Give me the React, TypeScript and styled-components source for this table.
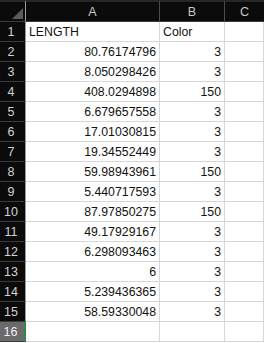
import styled, { createGlobalStyle } from 'styled-components';

const GlobalStyle = createGlobalStyle`
  html, body {
    margin: 0;
    padding: 0;
    background: #ffffff;
    overflow: hidden;
  }
`;

const rows: { a: string; b: string }[] = [
  { a: 'LENGTH', b: 'Color' },
  { a: '80.76174796', b: '3' },
  { a: '8.050298426', b: '3' },
  { a: '408.0294898', b: '150' },
  { a: '6.679657558', b: '3' },
  { a: '17.01030815', b: '3' },
  { a: '19.34552449', b: '3' },
  { a: '59.98943961', b: '150' },
  { a: '5.440717593', b: '3' },
  { a: '87.97850275', b: '150' },
  { a: '49.17929167', b: '3' },
  { a: '6.298093463', b: '3' },
  { a: '6', b: '3' },
  { a: '5.239436365', b: '3' },
  { a: '58.59330048', b: '3' },
  { a: '', b: '' },
];

const Sheet = styled.div`
  display: grid;
  grid-template-columns: 26px 134px 65px 1fr;
  grid-auto-rows: 20px;
  grid-template-rows: 22px;
  width: 264px;
  font-family: 'Liberation Sans', Arial, sans-serif;
  font-size: 12.3px;
`;

const Corner = styled.div`
  position: relative;
  background: #0b0b0b;
  border-top: 2px solid #262626;
  border-right: 1px solid #9a9a9a;
  border-bottom: 1px solid #3c3c3c;
`;

const Triangle = styled.svg`
  position: absolute;
  left: 12px;
  top: 6px;
`;

const ColHead = styled.div<{ $last?: boolean }>`
  display: flex;
  align-items: center;
  justify-content: center;
  background: #0b0b0b;
  color: #c9c9c9;
  font-size: 12.5px;
  border-top: 2px solid #262626;
  border-right: ${(p) => (p.$last ? 'none' : '1px solid #4a4a4a')};
  border-bottom: 1px solid #3c3c3c;
`;

const RowHead = styled.div<{ $active?: boolean }>`
  display: flex;
  align-items: center;
  justify-content: center;
  padding-right: 3px;
  background: ${(p) => (p.$active ? '#6a6a6a' : '#0b0b0b')};
  color: ${(p) => (p.$active ? '#f0f0f0' : '#d2d2d2')};
  font-size: 12.5px;
  border-bottom: 1px solid #3c3c3c;
  border-right: ${(p) => (p.$active ? '2px solid #2e8b4f' : '1px solid #9a9a9a')};
`;

const Cell = styled.div<{ $align: 'left' | 'right' }>`
  display: flex;
  align-items: center;
  justify-content: ${(p) => (p.$align === 'left' ? 'flex-start' : 'flex-end')};
  padding: 0 3px 0 3px;
  color: #111111;
  background: #ffffff;
  border-right: 1px solid #d6d6d6;
  border-bottom: 1px solid #d6d6d6;
  white-space: nowrap;
`;

const isNum = (v: string) => v !== '' && !isNaN(Number(v));

export default function App() {
  return (
    <>
      <GlobalStyle />
      <Sheet>
        <Corner>
          <Triangle width="11" height="11" viewBox="0 0 11 11">
            <polygon points="11,0 11,11 0,11" fill="#5a5a5a" />
          </Triangle>
        </Corner>
        <ColHead>A</ColHead>
        <ColHead>B</ColHead>
        <ColHead $last>C</ColHead>
        {rows.map((r, i) => (
          <Row key={i} index={i + 1} a={r.a} b={r.b} active={i === 15} />
        ))}
      </Sheet>
    </>
  );
}

function Row({ index, a, b, active }: { index: number; a: string; b: string; active?: boolean }) {
  return (
    <>
      <RowHead $active={active}>{index}</RowHead>
      <Cell $align={isNum(a) ? 'right' : 'left'}>{a}</Cell>
      <Cell $align={isNum(b) ? 'right' : 'left'}>{b}</Cell>
      <Cell $align="left" />
    </>
  );
}
